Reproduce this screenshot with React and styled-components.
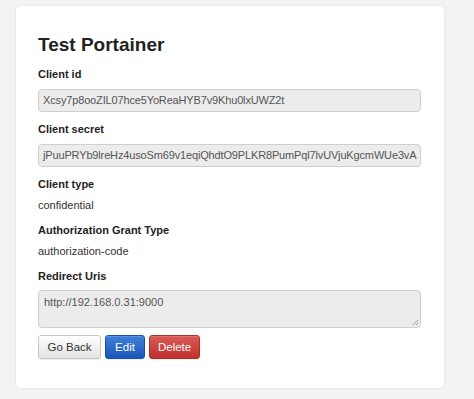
import React from 'react'
import styled, { createGlobalStyle } from 'styled-components'

const GlobalStyle = createGlobalStyle`
  html, body {
    margin: 0;
    padding: 0;
    background: #f3f3f3;
  }
  body {
    font-family: "Liberation Sans", Arial, sans-serif;
    color: #333;
  }
`

const Page = styled.div`
  padding: 6px 30px 12px 16px;
`

const Card = styled.div`
  background: #fff;
  border-radius: 4px;
  box-shadow: 0 0 2px rgba(0, 0, 0, 0.12);
  padding: 27px 23px 29px 22px;
`

const Title = styled.h1`
  margin: 0 0 8px;
  font-size: 19px;
  line-height: 24px;
  font-weight: 700;
  color: #222;
`

const Label = styled.div`
  font-size: 11px;
  line-height: 18px;
  font-weight: 700;
  color: #222;
  margin-bottom: ${({ gap }) => gap}px;
`

const ReadOnly = styled.div`
  box-sizing: border-box;
  height: ${({ tall }) => (tall ? 38 : 23)}px;
  padding: ${({ tall }) => (tall ? '4px 5px' : '0 4px')};
  display: flex;
  align-items: ${({ tall }) => (tall ? 'flex-start' : 'center')};
  background: #ececec;
  border: 1px solid #cfcfcf;
  border-radius: 4px;
  font-size: 11px;
  letter-spacing: ${({ tall }) => (tall ? 0 : -0.15)}px;
  line-height: 15px;
  color: #555;
  white-space: nowrap;
  overflow: hidden;
  position: relative;
  margin-bottom: 8px;
`

const Grip = styled.svg`
  position: absolute;
  right: 1px;
  bottom: 1px;
`

const Value = styled.div`
  font-size: 11px;
  line-height: 18px;
  color: #333;
  margin-bottom: 7px;
`

const Actions = styled.div`
  display: flex;
  gap: 4px;
  margin-top: -1px;
`

const palettes = {
  default: {
    bg: 'linear-gradient(#fefefe, #e3e3e3)',
    border: '#c8c8c8',
    color: '#333',
  },
  primary: {
    bg: 'linear-gradient(#3f81d9, #1a55b8)',
    border: '#1b50a8',
    color: '#fff',
  },
  danger: {
    bg: 'linear-gradient(#db5b57, #bf302c)',
    border: '#b02f2b',
    color: '#fff',
  },
}

const Button = styled.button`
  box-sizing: border-box;
  height: 24px;
  padding: 0 ${({ pad }) => pad}px;
  font-family: inherit;
  font-size: 11.5px;
  border-radius: 3px;
  cursor: pointer;
  background: ${({ variant }) => palettes[variant].bg};
  border: 1px solid ${({ variant }) => palettes[variant].border};
  color: ${({ variant }) => palettes[variant].color};
  box-shadow: inset 0 1px 0 rgba(255, 255, 255, 0.15), 0 1px 1px rgba(0, 0, 0, 0.08);
`

export default function App() {
  return (
    <>
      <GlobalStyle />
      <Page>
        <Card>
          <Title>Test Portainer</Title>

          <Label gap={6}>Client id</Label>
          <ReadOnly>Xcsy7p8ooZIL07hce5YoReaHYB7v9Khu0lxUWZ2t</ReadOnly>

          <Label gap={6}>Client secret</Label>
          <ReadOnly>jPuuPRYb9lreHz4usoSm69v1eqiQhdtO9PLKR8PumPql7lvUVjuKgcmWUe3vA</ReadOnly>

          <Label gap={3}>Client type</Label>
          <Value>confidential</Value>

          <Label gap={3}>Authorization Grant Type</Label>
          <Value>authorization-code</Value>

          <Label gap={5}>Redirect Uris</Label>
          <ReadOnly tall>
            http://192.168.0.31:9000
            <Grip width="7" height="7" viewBox="0 0 7 7">
              <path d="M6 1 L1 6 M6 4 L4 6" stroke="#888" strokeWidth="0.8" />
            </Grip>
          </ReadOnly>

          <Actions>
            <Button variant="default" pad={8.5}>Go Back</Button>
            <Button variant="primary" pad={9}>Edit</Button>
            <Button variant="danger" pad={8}>Delete</Button>
          </Actions>
        </Card>
      </Page>
    </>
  )
}
